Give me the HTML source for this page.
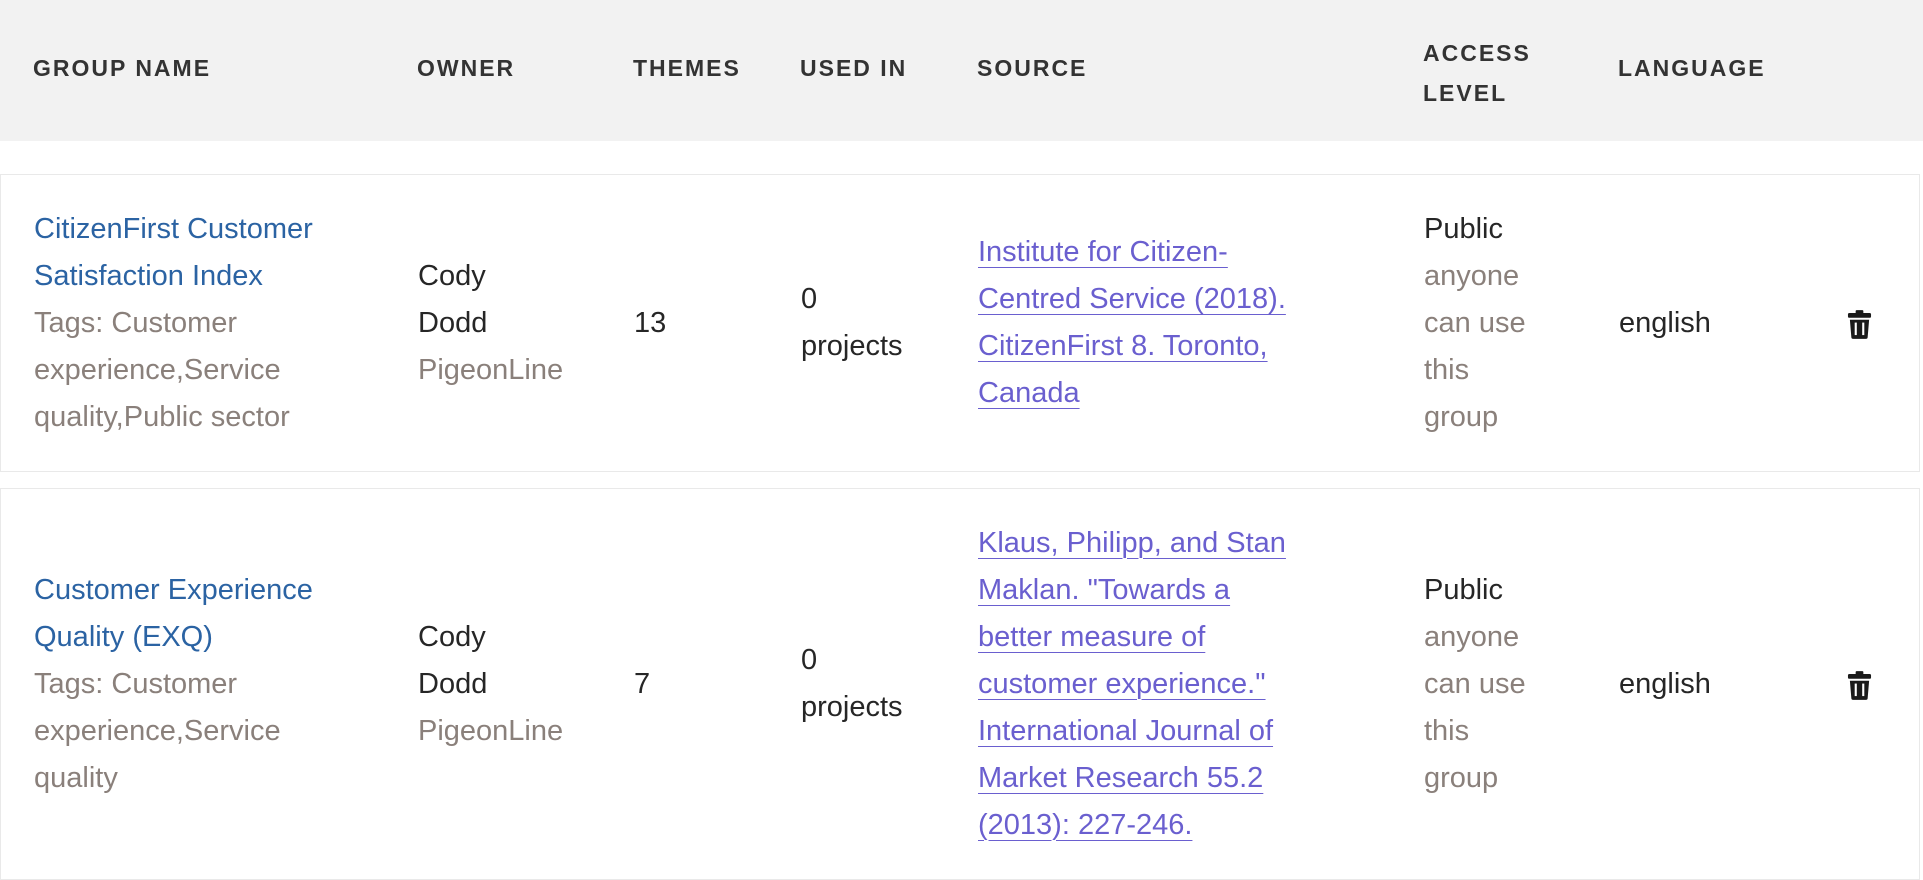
<!DOCTYPE html>
<html><head><meta charset="utf-8"><style>
body{margin:0;width:1923px;height:880px;background:#fff;font-family:"Liberation Sans",sans-serif;overflow:hidden;position:relative}
.hdr{position:absolute;left:0;top:0;width:1923px;height:141px;background:#f2f2f2}
.h{position:absolute;font-size:23px;font-weight:bold;letter-spacing:2px;color:#333;line-height:31px}
.row{position:absolute;left:0;width:1920px;border:1px solid #e9e9e9;box-sizing:border-box}
.c{position:absolute;top:0;bottom:0;display:flex;align-items:center;font-size:29px;line-height:47px;white-space:nowrap}
.c>div{width:100%}
.blue{color:#2b63a3}.gray{color:#8a807b}.dark{color:#262626}
.link{color:#6a5fcf;text-decoration:underline;text-decoration-thickness:1px;text-underline-offset:6px}
.trash{position:absolute;left:1846px}
</style></head><body>
<div class="hdr"></div>
<div class="h" style="left:33px;top:53px">GROUP NAME</div>
<div class="h" style="left:417px;top:53px">OWNER</div>
<div class="h" style="left:633px;top:53px">THEMES</div>
<div class="h" style="left:800px;top:53px">USED IN</div>
<div class="h" style="left:977px;top:53px">SOURCE</div>
<div class="h" style="left:1423px;top:33px;line-height:40px">ACCESS<br>LEVEL</div>
<div class="h" style="left:1618px;top:53px">LANGUAGE</div>

<div class="row" style="top:174px;height:298px">
 <div class="c" style="left:33px"><div><span class="blue">CitizenFirst Customer<br>Satisfaction Index</span><br><span class="gray">Tags: Customer<br>experience,Service<br>quality,Public sector</span></div></div>
 <div class="c" style="left:417px"><div><span class="dark">Cody<br>Dodd</span><br><span class="gray">PigeonLine</span></div></div>
 <div class="c dark" style="left:633px"><div>13</div></div>
 <div class="c dark" style="left:800px"><div>0<br>projects</div></div>
 <div class="c" style="left:977px"><div class="link">Institute for Citizen-<br>Centred Service (2018).<br>CitizenFirst 8. Toronto,<br>Canada</div></div>
 <div class="c" style="left:1423px"><div><span class="dark">Public</span><br><span class="gray">anyone<br>can use<br>this<br>group</span></div></div>
 <div class="c dark" style="left:1618px"><div>english</div></div>
 <svg class="trash" style="top:135px" width="25" height="29" viewBox="0 0 26 30"><rect x="9" y="0" width="8" height="4" rx="1" fill="#1a1a1a"/><rect x="1" y="3" width="24" height="5" rx="1.5" fill="#1a1a1a"/><path d="M3 10h20l-1.5 18a2 2 0 0 1-2 2h-13a2 2 0 0 1-2-2z" fill="#1a1a1a"/><rect x="8" y="13" width="2.2" height="13" fill="#fff"/><rect x="15.8" y="13" width="2.2" height="13" fill="#fff"/></svg>
</div>

<div class="row" style="top:488px;height:392px">
 <div class="c" style="left:33px"><div><span class="blue">Customer Experience<br>Quality (EXQ)</span><br><span class="gray">Tags: Customer<br>experience,Service<br>quality</span></div></div>
 <div class="c" style="left:417px"><div><span class="dark">Cody<br>Dodd</span><br><span class="gray">PigeonLine</span></div></div>
 <div class="c dark" style="left:633px"><div>7</div></div>
 <div class="c dark" style="left:800px"><div>0<br>projects</div></div>
 <div class="c" style="left:977px"><div class="link">Klaus, Philipp, and Stan<br>Maklan. "Towards a<br>better measure of<br>customer experience."<br>International Journal of<br>Market Research 55.2<br>(2013): 227-246.</div></div>
 <div class="c" style="left:1423px"><div><span class="dark">Public</span><br><span class="gray">anyone<br>can use<br>this<br>group</span></div></div>
 <div class="c dark" style="left:1618px"><div>english</div></div>
 <svg class="trash" style="top:182px" width="25" height="29" viewBox="0 0 26 30"><rect x="9" y="0" width="8" height="4" rx="1" fill="#1a1a1a"/><rect x="1" y="3" width="24" height="5" rx="1.5" fill="#1a1a1a"/><path d="M3 10h20l-1.5 18a2 2 0 0 1-2 2h-13a2 2 0 0 1-2-2z" fill="#1a1a1a"/><rect x="8" y="13" width="2.2" height="13" fill="#fff"/><rect x="15.8" y="13" width="2.2" height="13" fill="#fff"/></svg>
</div>
</body></html>
